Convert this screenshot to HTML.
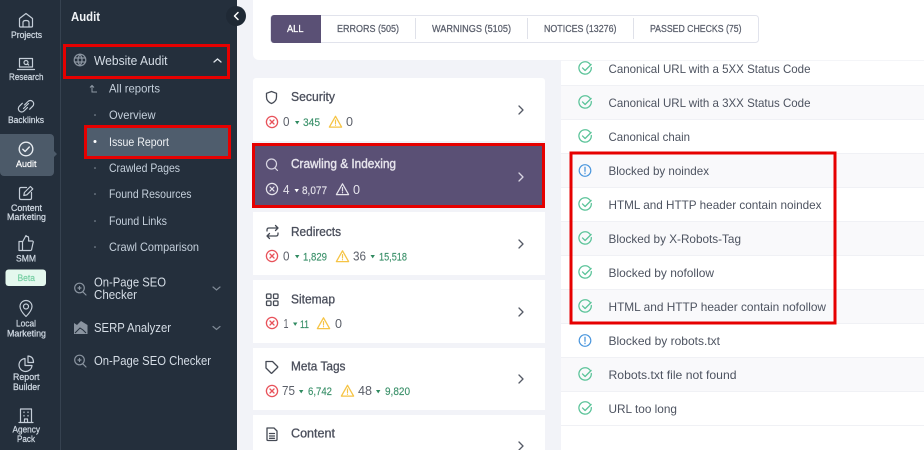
<!DOCTYPE html>
<html><head><meta charset="utf-8"><style>
html,body{margin:0;padding:0;width:924px;height:450px;overflow:hidden;background:#f2f3f8}
svg{display:block;font-family:"Liberation Sans",sans-serif;filter:blur(.3px)}
.r{font-size:9px;fill:#cfd8e2;stroke:#cfd8e2;stroke-width:.25px}
.p{font-size:12px;fill:#c5d0dc}
.m{font-size:12.5px;fill:#d5dde6}
.c{font-size:12.5px;fill:#4b4f5c;stroke:#4b4f5c;stroke-width:.3px}
.n{font-size:13px;fill:#5b5f69}
.g{font-size:11px;fill:#3a9069;stroke:#3a9069;stroke-width:.15px}
.t{font-size:10px;fill:#5a5f6c;stroke:#5a5f6c;stroke-width:.25px}
.l{font-size:12px;fill:#4d5360}
.wt{fill:#fff;stroke:#fff}
.ic{fill:none;stroke:#c5ced8;stroke-width:1.2;stroke-linecap:round;stroke-linejoin:round}
.mi{fill:none;stroke:#8a94a0;stroke-width:1.2;stroke-linecap:round;stroke-linejoin:round}
.ci{fill:none;stroke:#454a55;stroke-width:1.3;stroke-linecap:round;stroke-linejoin:round}
.ch{fill:none;stroke:#555a66;stroke-width:1.3;stroke-linecap:round;stroke-linejoin:round}
</style></head><body>
<svg width="924" height="450" viewBox="0 0 924 450" xmlns="http://www.w3.org/2000/svg">
<defs>
<g id="ok"><path d="M11.5 2.6A6.2 6.2 0 1 0 12.8 6" fill="none" stroke="#5cc49a" stroke-width="1.3" stroke-linecap="round"/><path d="M4 6.4l2.6 2.6L12.6 3" fill="none" stroke="#5cc49a" stroke-width="1.3" stroke-linecap="round" stroke-linejoin="round"/></g>
<g id="info"><circle cx="6.5" cy="6.5" r="5.8" fill="none" stroke="#4c97dd" stroke-width="1.2"/><path d="M6.5 3.3v4M6.5 9.2v.4" stroke="#4c97dd" stroke-width="1.3" stroke-linecap="round"/></g>
<g id="err"><circle cx="6" cy="6" r="5.6" fill="none" stroke="#e8525a" stroke-width="1.3"/><path d="M4 4l4 4M8 4l-4 4" stroke="#e8525a" stroke-width="1.3" stroke-linecap="round"/></g>
<g id="warn"><path d="M6.5.8L12.6 11.6H.4Z" fill="none" stroke="#f6c445" stroke-width="1.3" stroke-linejoin="round"/><path d="M6.5 4.6v3.4M6.5 9.6v.2" stroke="#f6c445" stroke-width="1.2" stroke-linecap="round"/></g>
<path id="dn" d="M0 0h4.4L2.2 3.4Z" fill="#2f8a60"/>
<path id="chev" d="M0 0l4 4-4 4" class="ch"/>
</defs>

<!-- sidebar -->
<rect x="0" y="0" width="237" height="450" fill="#242f3c"/>
<rect x="60" y="0" width="1" height="450" fill="#364250"/>
<path d="M4 134H50a4 4 0 0 1 4 4V151l3 3-3 3V172a4 4 0 0 1-4 4H4a4 4 0 0 1-4-4V134Z" fill="#4c5a69"/>

<!-- rail icons -->
<path class="ic" d="M19.500 26V18.500L26 13.500L32.500 18.500V26Q32.500 27 31.500 27H20.500Q19.500 27 19.500 26ZM23 27V22.500Q23 20.500 26 20.500T29 22.500V27"/>
<path class="ic" d="M19.500 58.500H32.500V67H19.500ZM17.500 69.500H34.500"/><circle class="ic" cx="26" cy="62.500" r="2"/><path class="ic" d="M27.500 64l1.200 1"/>
<path class="ic" d="M24.500 105l3.500-3.500a3.300 3.300 0 0 1 4.700 4.700l-3 3M27.500 107.500l-3.500 3.500a3.300 3.300 0 0 1-4.700-4.700l3-3M23.500 108.500l5-5"/>
<circle cx="26" cy="149" r="6.800" fill="none" stroke="#e6ebf0" stroke-width="1.400"/><path d="M22.800 149.200l2.300 2.300 4.200-4.500" fill="none" stroke="#e6ebf0" stroke-width="1.400" stroke-linecap="round" stroke-linejoin="round"/>
<path class="ic" d="M31.500 192.500V198Q31.500 199.500 30 199.500H21Q19.500 199.500 19.500 198V189Q19.500 187.500 21 187.500H26.500M23.800 195.500l.6-3 6-6 2.400 2.400-6 6Z"/>
<path class="ic" d="M19 241.500H22.500V250.500H19ZM22.500 242L26 235.500Q26.500 237 28 236.500Q29 237.500 28.500 241H32.500Q33.800 241.500 33 243L31.500 250Q31 250.500 30 250.500H22.500"/>
<path class="ic" d="M26 316.500Q32 310.500 32 306.500A6 6 0 0 0 20 306.500Q20 310.500 26 316.500Z"/><circle class="ic" cx="26" cy="306.500" r="2.500"/>
<path class="ic" d="M25 358.500A6.500 6.500 0 1 0 32 365.500H25ZM28 356V362.500H33.500Q33.500 356.500 28 356Z"/>
<path class="ic" d="M20.500 422.500V409H31.500V422.500ZM19 422.500H33M24 412v.5M28 412v.5M24 415.500v.5M28 415.500v.5M24.500 422.500V419H27.500V422.500"/>

<!-- rail labels -->
<text class="r" x="11" y="38" textLength="31" lengthAdjust="spacingAndGlyphs">Projects</text>
<text class="r" x="9" y="80" textLength="34.500" lengthAdjust="spacingAndGlyphs">Research</text>
<text class="r" x="8" y="123" textLength="36" lengthAdjust="spacingAndGlyphs">Backlinks</text>
<text class="r wt" x="16" y="167" textLength="20.500" lengthAdjust="spacingAndGlyphs">Audit</text>
<text class="r" x="11" y="211" textLength="31" lengthAdjust="spacingAndGlyphs">Content</text>
<text class="r" x="7" y="220" textLength="39" lengthAdjust="spacingAndGlyphs">Marketing</text>
<text class="r" x="16" y="261.500" textLength="20" lengthAdjust="spacingAndGlyphs">SMM</text>
<rect x="5.500" y="269.500" width="40.500" height="16.500" rx="3" fill="#e4f8ee"/>
<text x="17.500" y="281" font-size="9" fill="#76cfa3" stroke="#76cfa3" stroke-width=".2" textLength="17.500" lengthAdjust="spacingAndGlyphs">Beta</text>
<text class="r" x="16" y="326.500" textLength="20" lengthAdjust="spacingAndGlyphs">Local</text>
<text class="r" x="7" y="336.500" textLength="39" lengthAdjust="spacingAndGlyphs">Marketing</text>
<text class="r" x="13" y="380" textLength="26.500" lengthAdjust="spacingAndGlyphs">Report</text>
<text class="r" x="13" y="390" textLength="27" lengthAdjust="spacingAndGlyphs">Builder</text>
<text class="r" x="12.500" y="432.500" textLength="27.500" lengthAdjust="spacingAndGlyphs">Agency</text>
<text class="r" x="17" y="442" textLength="18" lengthAdjust="spacingAndGlyphs">Pack</text>

<!-- panel -->
<text x="71" y="21" font-size="12.500" font-weight="bold" fill="#f0f3f6" textLength="29" lengthAdjust="spacingAndGlyphs">Audit</text>
<rect x="85" y="126" width="145" height="32" fill="#4f5d6d"/>
<g class="mi"><circle cx="80" cy="60" r="5.800"/><path d="M74.500 58h11M74.500 62h11M80 54.200q-4 5.800 0 11.600M80 54.200q4 5.800 0 11.600"/></g>
<text class="m" x="94" y="65" textLength="73.500" lengthAdjust="spacingAndGlyphs">Website Audit</text>
<path d="M214 62l3.500-3 3.500 3" fill="none" stroke="#e0e6ec" stroke-width="1.300" stroke-linecap="round"/>
<path d="M92 92.500V85.500M90 87.500l2-2 2 2M92 92h5" fill="none" stroke="#8e98a4" stroke-width="1"/>
<text class="p" x="109" y="92.500" textLength="51" lengthAdjust="spacingAndGlyphs">All reports</text>
<circle cx="95" cy="115" r=".8" fill="#8e98a4"/>
<text class="p" x="109" y="119" textLength="46.500" lengthAdjust="spacingAndGlyphs">Overview</text>
<circle cx="95" cy="141.500" r="1.500" fill="#fff"/>
<text class="p" x="109" y="146" textLength="60" lengthAdjust="spacingAndGlyphs" style="fill:#eef1f4">Issue Report</text>
<circle cx="95" cy="168" r=".8" fill="#8e98a4"/>
<text class="p" x="109" y="172" textLength="71" lengthAdjust="spacingAndGlyphs">Crawled Pages</text>
<circle cx="95" cy="194" r=".8" fill="#8e98a4"/>
<text class="p" x="109" y="198" textLength="82.500" lengthAdjust="spacingAndGlyphs">Found Resources</text>
<circle cx="95" cy="221" r=".8" fill="#8e98a4"/>
<text class="p" x="109" y="225" textLength="58" lengthAdjust="spacingAndGlyphs">Found Links</text>
<circle cx="95" cy="247" r=".8" fill="#8e98a4"/>
<text class="p" x="109" y="251" textLength="90" lengthAdjust="spacingAndGlyphs">Crawl Comparison</text>

<g class="mi"><circle cx="79.500" cy="288" r="4.800"/><path d="M83 292l3 3"/><path d="M79.500 286.500v3M78 288h3"/></g>
<text class="m" x="94" y="286.500" textLength="72" lengthAdjust="spacingAndGlyphs">On-Page SEO</text>
<text class="m" x="94" y="299" textLength="43" lengthAdjust="spacingAndGlyphs">Checker</text>
<path d="M213 287l3.500 3 3.500-3" fill="none" stroke="#7f8a96" stroke-width="1.200" stroke-linecap="round"/>
<path d="M74 334V323l3 2 4-4 6.500 4V334Z" fill="#8a94a0"/><path d="M75 333l5-5 3 2 3 3" fill="none" stroke="#242f3c" stroke-width="1"/>
<text class="m" x="94" y="332" textLength="77" lengthAdjust="spacingAndGlyphs">SERP Analyzer</text>
<path d="M213 326.500l3.500 3 3.500-3" fill="none" stroke="#7f8a96" stroke-width="1.200" stroke-linecap="round"/>
<g class="mi"><circle cx="79.500" cy="360" r="4.800"/><path d="M83 364l3 3"/><path d="M79.500 358.500v3M78 360h3"/></g>
<text class="m" x="94" y="365" textLength="117" lengthAdjust="spacingAndGlyphs">On-Page SEO Checker</text>

<!-- top card -->
<path d="M253 0H924V60H259a6 6 0 0 1-6-6Z" fill="#fff"/>
<circle cx="236" cy="16" r="10" fill="#1f2935"/>
<path d="M238 12.500l-3.500 3.500 3.500 3.500" fill="none" stroke="#fff" stroke-width="1.500" stroke-linecap="round" stroke-linejoin="round"/>
<rect x="270.500" y="15.500" width="488" height="27" rx="3" fill="#fff" stroke="#e1e3ec"/>
<path d="M274 15H321V43H274a3 3 0 0 1-3-3V18a3 3 0 0 1 3-3Z" fill="#5a5075"/>
<rect x="415" y="18" width="1" height="21" fill="#dfe1e9"/><rect x="527" y="18" width="1" height="21" fill="#dfe1e9"/><rect x="633" y="18" width="1" height="21" fill="#dfe1e9"/>
<text class="t wt" x="287" y="32" textLength="16.500" lengthAdjust="spacingAndGlyphs">ALL</text>
<text class="t" x="337" y="32" textLength="62" lengthAdjust="spacingAndGlyphs">ERRORS (505)</text>
<text class="t" x="432" y="32" textLength="79" lengthAdjust="spacingAndGlyphs">WARNINGS (5105)</text>
<text class="t" x="544" y="32" textLength="72.500" lengthAdjust="spacingAndGlyphs">NOTICES (13276)</text>
<text class="t" x="650" y="32" textLength="91.500" lengthAdjust="spacingAndGlyphs">PASSED CHECKS (75)</text>

<!-- category cards -->
<path d="M256 78H542a3 3 0 0 1 3 3V141H253V81a3 3 0 0 1 3-3Z" fill="#fff"/>
<rect x="253" y="212" width="292" height="63" fill="#fff"/>
<rect x="253" y="280" width="292" height="63" fill="#fff"/>
<rect x="253" y="348" width="292" height="62" fill="#fff"/>
<rect x="253" y="415" width="292" height="35" fill="#fff"/>
<rect x="253.500" y="144.500" width="290" height="62" fill="#5a5075" stroke="#e60000" stroke-width="3"/>

<!-- security -->
<path class="ci" d="M271.500 91.500l5 1.800V97q0 4.500-5 6.500-5-2-5-6.500V93.300Z"/>
<text class="c" x="291" y="101" textLength="44" lengthAdjust="spacingAndGlyphs">Security</text>
<use href="#err" x="266" y="116"/>
<text class="n" x="283" y="126" textLength="6.500" lengthAdjust="spacingAndGlyphs">0</text>
<use href="#dn" x="295" y="121"/>
<text class="g" x="303" y="126" textLength="17" lengthAdjust="spacingAndGlyphs">345</text>
<use href="#warn" x="329" y="115.500"/>
<text class="n" x="346" y="126" textLength="7" lengthAdjust="spacingAndGlyphs">0</text>
<use href="#chev" x="519" y="106"/>

<!-- crawling -->
<circle cx="271.500" cy="164" r="5" fill="none" stroke="#d8d5e2" stroke-width="1.200"/><path d="M275 168l2.500 2.500" stroke="#d8d5e2" stroke-width="1.200" stroke-linecap="round"/>
<text class="c" x="291" y="168" textLength="105" lengthAdjust="spacingAndGlyphs" style="fill:#e6e4ec;stroke:#e6e4ec;stroke-width:.4px">Crawling &amp; Indexing</text>
<g transform="translate(266 183)"><circle cx="6" cy="6" r="5.600" fill="none" stroke="#e6e4ec" stroke-width="1.200"/><path d="M4 4l4 4M8 4l-4 4" stroke="#e6e4ec" stroke-width="1.200" stroke-linecap="round"/></g>
<text class="n" x="283" y="194" textLength="6.500" lengthAdjust="spacingAndGlyphs" style="fill:#e6e4ec">4</text>
<path d="M294.500 189h4.400l-2.200 3.400Z" fill="#fff"/>
<text class="g" x="302" y="194" textLength="25" lengthAdjust="spacingAndGlyphs" style="fill:#e6e4ec;stroke:#e6e4ec">8,077</text>
<g transform="translate(336 183)"><path d="M6.500.8L12.600 11.600H.4Z" fill="none" stroke="#e6e4ec" stroke-width="1.200" stroke-linejoin="round"/><path d="M6.500 4.600v3.400M6.500 9.600v.2" stroke="#e6e4ec" stroke-width="1.200" stroke-linecap="round"/></g>
<text class="n" x="353" y="194" textLength="7" lengthAdjust="spacingAndGlyphs" style="fill:#e6e4ec">0</text>
<path d="M519 173l4 4-4 4" fill="none" stroke="#d8d5e2" stroke-width="1.300" stroke-linecap="round" stroke-linejoin="round"/>

<!-- redirects -->
<path class="ci" d="M267 231v-1q0-2 2-2h9M275.500 225.500l2.500 2.500-2.500 2.500M278 233v1q0 2-2 2h-9M269.500 238.500l-2.500-2.500 2.500-2.500"/>
<text class="c" x="291" y="236" textLength="50" lengthAdjust="spacingAndGlyphs">Redirects</text>
<use href="#err" x="266" y="250"/>
<text class="n" x="283" y="260.500" textLength="6.500" lengthAdjust="spacingAndGlyphs">0</text>
<use href="#dn" x="295" y="255"/>
<text class="g" x="303" y="260.500" textLength="24" lengthAdjust="spacingAndGlyphs">1,829</text>
<use href="#warn" x="336" y="250"/>
<text class="n" x="353" y="260.500" textLength="13" lengthAdjust="spacingAndGlyphs">36</text>
<use href="#dn" x="370.500" y="255"/>
<text class="g" x="379" y="260.500" textLength="28" lengthAdjust="spacingAndGlyphs">15,518</text>
<use href="#chev" x="519" y="240"/>

<!-- sitemap -->
<g class="ci"><rect x="266.500" y="294" width="4.500" height="4.500" rx="1"/><rect x="273.500" y="294" width="4.500" height="4.500" rx="1"/><rect x="266.500" y="301" width="4.500" height="4.500" rx="1"/><rect x="273.500" y="301" width="4.500" height="4.500" rx="1"/></g>
<text class="c" x="291" y="303.500" textLength="44" lengthAdjust="spacingAndGlyphs">Sitemap</text>
<use href="#err" x="266" y="317"/>
<text class="n" x="283.500" y="328" textLength="5" lengthAdjust="spacingAndGlyphs">1</text>
<use href="#dn" x="293" y="322.500"/>
<text class="g" x="300" y="328" textLength="9" lengthAdjust="spacingAndGlyphs">11</text>
<use href="#warn" x="317" y="317"/>
<text class="n" x="335" y="328" textLength="7" lengthAdjust="spacingAndGlyphs">0</text>
<use href="#chev" x="519" y="308"/>

<!-- meta tags -->
<path class="ci" d="M266 361.500H272.500L277.500 366.500Q278 367 277.500 367.500L272 373Q271.500 373.500 271 373L266 368Z"/>
<text class="c" x="291" y="370.500" textLength="54.500" lengthAdjust="spacingAndGlyphs">Meta Tags</text>
<use href="#err" x="266" y="385"/>
<text class="n" x="282" y="395" textLength="13" lengthAdjust="spacingAndGlyphs">75</text>
<use href="#dn" x="299" y="390"/>
<text class="g" x="308" y="395" textLength="24" lengthAdjust="spacingAndGlyphs">6,742</text>
<use href="#warn" x="341" y="384.500"/>
<text class="n" x="358" y="395" textLength="14" lengthAdjust="spacingAndGlyphs">48</text>
<use href="#dn" x="376" y="390"/>
<text class="g" x="385" y="395" textLength="25" lengthAdjust="spacingAndGlyphs">9,820</text>
<use href="#chev" x="519" y="375"/>

<!-- content -->
<path class="ci" d="M267 428H274L277 431V439.500Q277 440.500 276 440.500H268Q267 440.500 267 439.500ZM269.500 433.500H274.500M269.500 436H274.500M269.500 438.300H274.500"/>
<text class="c" x="291" y="437.500" textLength="44" lengthAdjust="spacingAndGlyphs">Content</text>
<use href="#chev" x="519" y="442"/>

<!-- right list -->
<rect x="561" y="60" width="363" height="390" fill="#fff"/>
<rect x="561" y="60" width="363" height="1" fill="#f4f5f8"/>
<rect x="561" y="85" width="363" height="34" fill="#f9f9fb"/>
<rect x="561" y="153" width="363" height="34" fill="#f9f9fb"/>
<rect x="561" y="221" width="363" height="34" fill="#f9f9fb"/>
<rect x="561" y="289" width="363" height="34" fill="#f9f9fb"/>
<rect x="561" y="357" width="363" height="34" fill="#f9f9fb"/>
<g fill="#f0f1f5"><rect x="561" y="85" width="363" height="1"/><rect x="561" y="119" width="363" height="1"/><rect x="561" y="153" width="363" height="1"/><rect x="561" y="187" width="363" height="1"/><rect x="561" y="221" width="363" height="1"/><rect x="561" y="255" width="363" height="1"/><rect x="561" y="289" width="363" height="1"/><rect x="561" y="323" width="363" height="1"/><rect x="561" y="357" width="363" height="1"/><rect x="561" y="391" width="363" height="1"/><rect x="561" y="425" width="363" height="1"/></g>

<use href="#ok" x="578.500" y="61.500"/><text class="l" x="608.500" y="73" textLength="202" lengthAdjust="spacingAndGlyphs">Canonical URL with a 5XX Status Code</text>
<use href="#ok" x="578.500" y="95.500"/><text class="l" x="608.500" y="107" textLength="202" lengthAdjust="spacingAndGlyphs">Canonical URL with a 3XX Status Code</text>
<use href="#ok" x="578.500" y="129.500"/><text class="l" x="608.500" y="141" textLength="81.500" lengthAdjust="spacingAndGlyphs">Canonical chain</text>
<use href="#info" x="578.500" y="164"/><text class="l" x="608.500" y="175" textLength="100.500" lengthAdjust="spacingAndGlyphs">Blocked by noindex</text>
<use href="#ok" x="578.500" y="197.500"/><text class="l" x="608.500" y="209" textLength="213" lengthAdjust="spacingAndGlyphs">HTML and HTTP header contain noindex</text>
<use href="#ok" x="578.500" y="231.500"/><text class="l" x="608.500" y="243" textLength="132.500" lengthAdjust="spacingAndGlyphs">Blocked by X-Robots-Tag</text>
<use href="#ok" x="578.500" y="265.500"/><text class="l" x="608.500" y="277" textLength="105.500" lengthAdjust="spacingAndGlyphs">Blocked by nofollow</text>
<use href="#ok" x="578.500" y="299.500"/><text class="l" x="608.500" y="311" textLength="217.500" lengthAdjust="spacingAndGlyphs">HTML and HTTP header contain nofollow</text>
<use href="#info" x="578.500" y="334"/><text class="l" x="608.500" y="345" textLength="111.500" lengthAdjust="spacingAndGlyphs">Blocked by robots.txt</text>
<use href="#ok" x="578.500" y="367.500"/><text class="l" x="608.500" y="379" textLength="128" lengthAdjust="spacingAndGlyphs">Robots.txt file not found</text>
<use href="#ok" x="578.500" y="401.500"/><text class="l" x="608.500" y="413" textLength="68.500" lengthAdjust="spacingAndGlyphs">URL too long</text>

<!-- red highlight boxes -->
<g fill="none" stroke="#e60000" stroke-width="3">
<rect x="64.500" y="45.500" width="164" height="32"/>
<rect x="85.500" y="126.500" width="144" height="31"/>
<rect x="571" y="153" width="264" height="170"/>
</g>
</svg>
</body></html>
